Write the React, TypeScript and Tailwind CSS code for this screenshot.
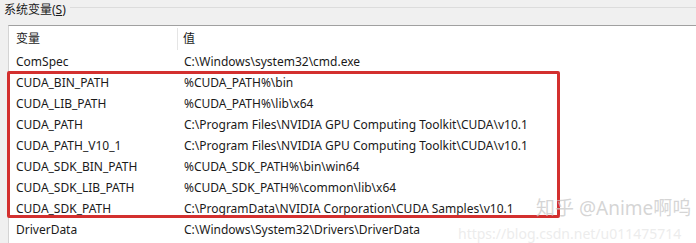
const rows: [string, string][] = [
  ['ComSpec', 'C:\\Windows\\system32\\cmd.exe'],
  ['CUDA_BIN_PATH', '%CUDA_PATH%\\bin'],
  ['CUDA_LIB_PATH', '%CUDA_PATH%\\lib\\x64'],
  ['CUDA_PATH', 'C:\\Program Files\\NVIDIA GPU Computing Toolkit\\CUDA\\v10.1'],
  ['CUDA_PATH_V10_1', 'C:\\Program Files\\NVIDIA GPU Computing Toolkit\\CUDA\\v10.1'],
  ['CUDA_SDK_BIN_PATH', '%CUDA_SDK_PATH%\\bin\\win64'],
  ['CUDA_SDK_LIB_PATH', '%CUDA_SDK_PATH%\\common\\lib\\x64'],
  ['CUDA_SDK_PATH', 'C:\\ProgramData\\NVIDIA Corporation\\CUDA Samples\\v10.1'],
  ['DriverData', 'C:\\Windows\\System32\\Drivers\\DriverData'],
];

const font = { fontFamily: '"Noto Sans", "Noto Sans CJK SC", sans-serif' };

export default function App() {
  return (
    <div
      className="relative w-[696px] h-[243px] overflow-hidden bg-[#f0f0f0] text-[12px] text-[#1a1a1a]"
      style={font}
    >
      {/* group box title */}
      <div className="flex items-center h-[25px] pl-[4px]">
        <span className="leading-none -mt-[6px]">
          系统变量(<span className="underline">S</span>)
        </span>
        <div className="flex-1 h-px bg-[#dcdcdc] ml-[4px] -mt-[10px]" />
      </div>

      {/* list */}
      <div className="ml-[8px] bg-white border-t border-t-[#a0a0a0] border-l border-l-[#d4d4d4] h-[218px]">
        <div className="flex h-[25px] items-center">
          <div className="w-[168px] pl-[7px]">变量</div>
          <div className="h-[22px] w-px bg-[#e5e5e5]" />
          <div className="pl-[5px]">值</div>
        </div>
        {rows.map(([name, value]) => (
          <div key={name} className="flex h-[21px] items-center whitespace-nowrap">
            <div className="w-[169px] pl-[7px]">{name}</div>
            <div className="pl-[6px]">{value}</div>
          </div>
        ))}
      </div>

      {/* red highlight */}
      <div className="absolute left-[7px] top-[71px] w-[553px] h-[147px] border-[3px] border-[#d3302f] rounded-[2px]" />

      {/* watermark */}
      <div className="absolute left-[536px] top-[199px] text-[19px] leading-none text-[#c8c8c8]/75 whitespace-nowrap">
        知乎 @Anime啊呜
      </div>
      <div className="absolute left-[458px] top-[227px] text-[14px] leading-none text-[#e4e4e4]/70 whitespace-nowrap">
        https://blog.csdn.net/u011475714
      </div>
    </div>
  );
}
